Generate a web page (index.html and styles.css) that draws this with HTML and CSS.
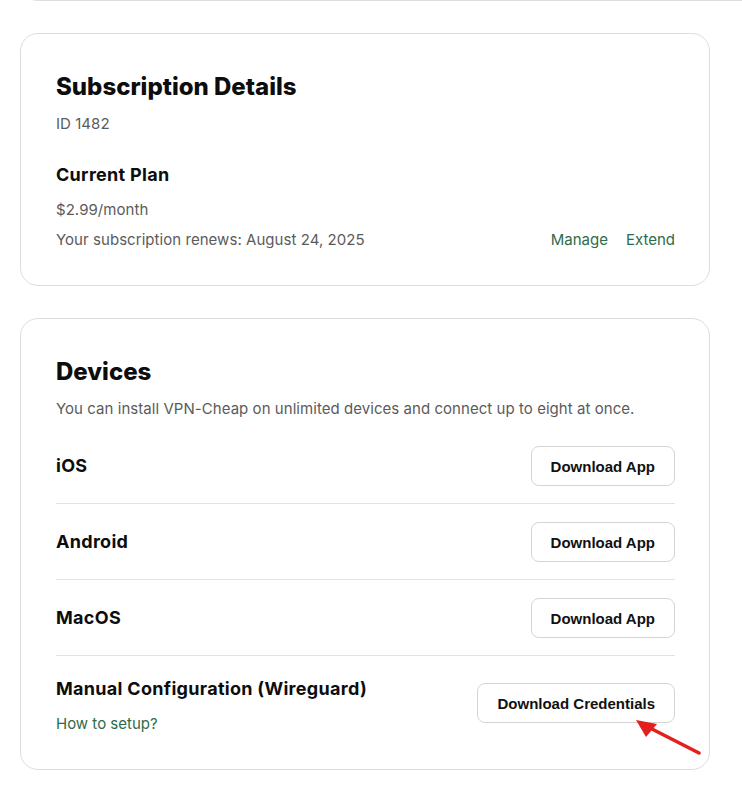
FILE: index.html
```html
<!DOCTYPE html>
<html>
<head>
<meta charset="utf-8">
<link rel="stylesheet" href="styles.css">
</head>
<body>
<div class="page">
  <div class="prev-card"></div>

  <section class="card">
    <h2 class="card-title">Subscription Details</h2>
    <p class="muted id-line">ID 1482</p>
    <h3 class="sub-title">Current Plan</h3>
    <p class="muted price">$2.99/month</p>
    <div class="renew-row">
      <p class="muted">Your subscription renews: August 24, 2025</p>
      <div class="links">
        <a class="link" href="#">Manage</a>
        <a class="link" href="#">Extend</a>
      </div>
    </div>
  </section>

  <section class="card devices">
    <h2 class="card-title">Devices</h2>
    <p class="muted desc">You can install VPN-Cheap on unlimited devices and connect up to eight at once.</p>
    <div class="device-list">
      <div class="device-row">
        <span class="device-name">iOS</span>
        <button class="btn">Download App</button>
      </div>
      <div class="device-row">
        <span class="device-name">Android</span>
        <button class="btn">Download App</button>
      </div>
      <div class="device-row">
        <span class="device-name">MacOS</span>
        <button class="btn">Download App</button>
      </div>
      <div class="device-row manual">
        <div class="manual-text">
          <span class="device-name">Manual Configuration (Wireguard)</span>
          <a class="link setup" href="#">How to setup?</a>
        </div>
        <button class="btn">Download Credentials</button>
      </div>
    </div>
    <svg class="arrow" width="85" height="50" viewBox="0 0 85 50">
      <line x1="79" y1="43" x2="30" y2="18" stroke="#e3201b" stroke-width="3.6" stroke-linecap="round"/>
      <polygon points="16,10 37,14 26,27" fill="#e3201b"/>
    </svg>
  </section>
</div>
</body>
</html>
```

FILE: styles.css
```css
html, body {
  margin: 0;
  padding: 0;
  background: #ffffff;
  overflow: hidden;
}
body {
  font-family: Inter, "Noto Sans", sans-serif;
  color: #111;
}
.page {
  width: 690px;
  margin-left: 20px;
  display: flex;
  flex-direction: column;
  gap: 32px;
}
.prev-card {
  height: 20px;
  margin-top: -20px;
  margin-right: -32px;
  margin-left: 2px;
  border: 1px solid #dedede;
  border-top: none;
  border-right: none;
  border-radius: 0 0 0 16px;
}
.card {
  position: relative;
  border: 1px solid #dddddd;
  border-radius: 18px;
  padding: 37px 34px 34px 35px;
  background: #fff;
}
.card-title {
  margin: 0;
  font-size: 24px;
  line-height: 32px;
  font-weight: 800;
  letter-spacing: 0;
  color: #0d0d0d;
}
.sub-title {
  margin: 28px 0 0 0;
  font-size: 18px;
  line-height: 24px;
  font-weight: 700;
  letter-spacing: 0.3px;
  color: #0d0d0d;
}
.muted {
  margin: 0;
  font-size: 15px;
  line-height: 22px;
  letter-spacing: 0.05px;
  color: #5b5b5b;
}
.id-line { margin-top: 10px; }
.price { margin-top: 12px; }
.renew-row {
  margin-top: 8px;
  display: flex;
  justify-content: space-between;
  align-items: center;
}
.links {
  display: flex;
  gap: 18px;
}
.link {
  font-size: 15px;
  line-height: 22px;
  color: #2e6b4c;
  text-decoration: none;
}
.desc { margin-top: 10px; }
.device-list {
  margin-top: 8px;
  display: flex;
  flex-direction: column;
}
.device-row {
  display: flex;
  justify-content: space-between;
  align-items: center;
  padding: 18px 0 17px 0;
  border-bottom: 1px solid #e2e2e2;
}
.device-row.manual {
  border-bottom: none;
  padding: 21px 0 0 0;
  align-items: flex-start;
}
.device-name {
  font-size: 18px;
  line-height: 24px;
  font-weight: 700;
  letter-spacing: 0.3px;
  color: #0d0d0d;
}
.manual-text {
  display: flex;
  flex-direction: column;
  gap: 12px;
}
.setup { line-height: 22px; }
.btn {
  font-family: "Liberation Sans", Arial, sans-serif;
  font-weight: 700;
  font-size: 15px;
  color: #111;
  background: #fff;
  border: 1px solid #d4d4d4;
  border-radius: 8px;
  height: 40px;
  padding: 0 19px;
  cursor: pointer;
}
.manual .btn { margin-top: 6px; }
.arrow {
  position: absolute;
  left: 599px;
  top: 391px;
}
```
